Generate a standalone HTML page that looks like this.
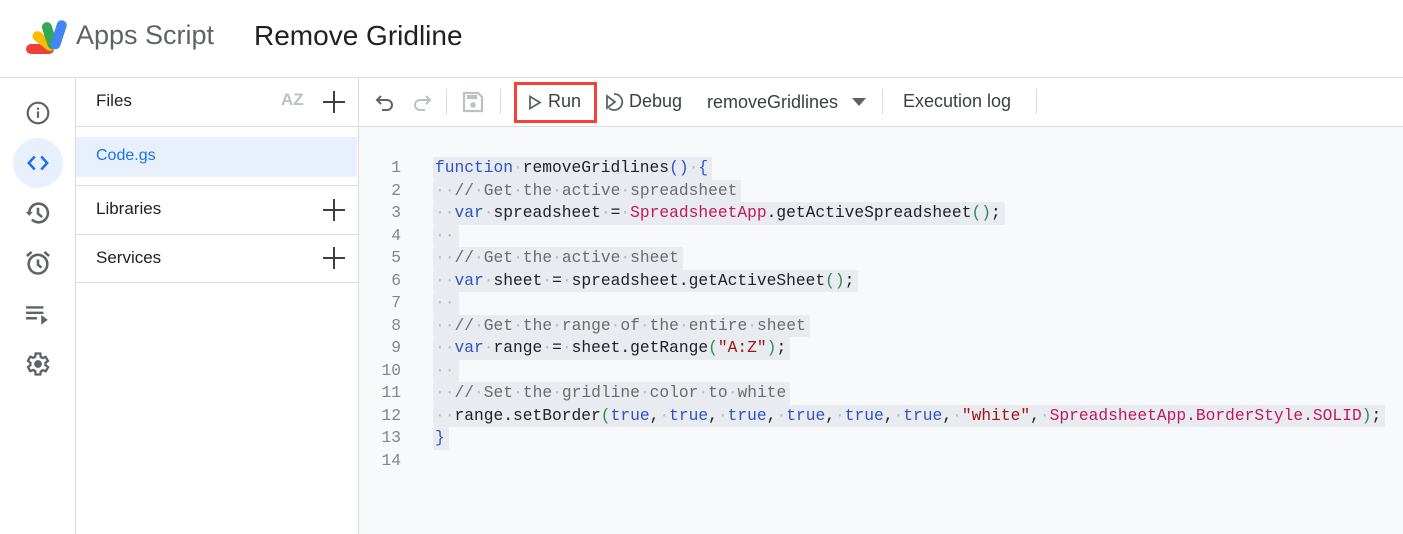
<!DOCTYPE html>
<html><head><meta charset="utf-8"><style>
*{margin:0;padding:0;box-sizing:border-box}
body{width:1403px;height:534px;overflow:hidden;background:#fff;font-family:"Liberation Sans",sans-serif;color:#202124;position:relative}
.a{position:absolute}
.hl{position:absolute;left:0;right:0;top:77px;height:1px;background:#dadce0}
.code{position:absolute;left:359px;top:127px;right:0;bottom:0;background:#f8f9fa}
.ln{position:absolute;left:370px;width:31px;text-align:right;font:16.25px "Liberation Mono",monospace;color:#80868b;line-height:22.5px}
.cl{position:absolute;left:433px;font:16.25px "Liberation Mono",monospace;line-height:22.5px;white-space:pre}
.cl span.b{background:#e8ebf0;padding:0 4px 0 2px;display:inline-block;border-radius:2px}
.d{color:#b8bcc2}.k{color:#2b55c4}.c{color:#6b6b6b}.m{color:#c2185b}.s{color:#a31515}.g{color:#2e8b57}
.side{font-size:17px;color:#202124}
.tb{font-size:18px;color:#3c4043}
</style></head><body>
<svg class="a" style="left:24px;top:18px" width="44" height="36" viewBox="0 0 44 36">
<g transform="translate(30,31)">
<rect x="-28" y="-5" width="28" height="10" rx="5" fill="#ea4335"/>
<rect x="-26" y="-5" width="26" height="10" rx="5" fill="#fbbc04" transform="rotate(38)"/>
<rect x="-28" y="-5" width="28" height="10" rx="5" fill="#34a853" transform="rotate(72)"/>
<rect x="-30" y="-5" width="30" height="10" rx="5" fill="#4285f4" transform="rotate(108)"/>
</g></svg>
<div class="a" style="left:76px;top:20px;font-size:27px;color:#5f6368">Apps Script</div>
<div class="a" style="left:254px;top:20px;font-size:28px;color:#202124">Remove Gridline</div>
<div class="hl"></div>
<div class="a" style="left:75px;top:78px;width:1px;height:456px;background:#dadce0"></div>
<div class="a" style="left:358px;top:78px;width:1px;height:456px;background:#dadce0"></div>
<div class="a" style="left:359px;top:126px;right:0;height:1px;background:#dadce0"></div>
<svg class="a" style="left:25px;top:100px" width="26" height="26" viewBox="0 0 24 24"><circle cx="12" cy="12" r="9.5" fill="none" stroke="#5f6368" stroke-width="2"/><rect x="11" y="10.5" width="2" height="6" fill="#5f6368"/><rect x="11" y="7" width="2" height="2" fill="#5f6368"/></svg>
<div class="a" style="left:13px;top:138px;width:50px;height:50px;border-radius:25px;background:#e8f0fe"></div>
<svg class="a" style="left:25px;top:150px" width="26" height="26" viewBox="0 0 24 24"><path d="M9 6L3.5 12 9 18M15 6l5.5 6L15 18" fill="none" stroke="#1a73e8" stroke-width="2.3"/></svg>
<svg class="a" style="left:24px;top:199px" width="28" height="28" viewBox="0 0 24 24"><path d="M4.5 12a8 8 0 1 1 2.3 5.6" fill="none" stroke="#5f6368" stroke-width="2.2"/><path d="M1.5 11h6l-3 3.5z" fill="#5f6368"/><path d="M12 7.5v5l3.5 3" fill="none" stroke="#5f6368" stroke-width="2.2"/></svg>
<svg class="a" style="left:24px;top:249px" width="28" height="28" viewBox="0 0 24 24"><circle cx="12" cy="13" r="8" fill="none" stroke="#5f6368" stroke-width="2.2"/><path d="M12 9v4.5l3 2.5M2.5 6l4-3.5M21.5 6l-4-3.5" fill="none" stroke="#5f6368" stroke-width="2.2"/></svg>
<svg class="a" style="left:25px;top:303px" width="26" height="24" viewBox="0 0 24 22"><path d="M1 4h16M1 9h16M1 14h10" stroke="#5f6368" stroke-width="2.2"/><path d="M15 11v9l6-4.5z" fill="#5f6368"/></svg>
<svg class="a" style="left:24px;top:350px" width="28" height="28" viewBox="0 0 24 24"><path d="M19.4 13a7.5 7.5 0 0 0 0-2l2.1-1.6-2-3.5-2.5 1a7.4 7.4 0 0 0-1.7-1L15 3h-4l-.4 2.7a7.4 7.4 0 0 0-1.7 1l-2.5-1-2 3.5L6.5 11a7.5 7.5 0 0 0 0 2l-2.1 1.6 2 3.5 2.5-1a7.4 7.4 0 0 0 1.7 1L11 21h4l.4-2.7a7.4 7.4 0 0 0 1.7-1l2.5 1 2-3.5z" fill="none" stroke="#5f6368" stroke-width="2" transform="translate(-1 0)"/><circle cx="12" cy="12" r="3.3" fill="#5f6368"/></svg>
<div class="a side" style="left:96px;top:91px">Files</div>
<div class="a" style="left:281px;top:90px;font-size:17px;font-weight:bold;color:#bdc1c6">AZ</div>
<svg class="a" style="left:323px;top:91px" width="22" height="22"><path d="M11 0v22M0 11h22" stroke="#3c4043" stroke-width="2"/></svg>
<div class="a" style="left:76px;top:126px;width:282px;height:1px;background:#dadce0"></div>
<div class="a" style="left:76px;top:137px;width:281px;height:40px;background:#e8f0fe"></div>
<div class="a" style="left:96px;top:147px;font-size:16px;color:#1a73e8">Code.gs</div>
<div class="a" style="left:76px;top:185px;width:282px;height:1px;background:#dadce0"></div>
<div class="a side" style="left:96px;top:199px">Libraries</div>
<svg class="a" style="left:323px;top:199px" width="22" height="22"><path d="M11 0v22M0 11h22" stroke="#3c4043" stroke-width="2"/></svg>
<div class="a" style="left:76px;top:234px;width:282px;height:1px;background:#dadce0"></div>
<div class="a side" style="left:96px;top:248px">Services</div>
<svg class="a" style="left:323px;top:247px" width="22" height="22"><path d="M11 0v22M0 11h22" stroke="#3c4043" stroke-width="2"/></svg>
<div class="a" style="left:76px;top:282px;width:282px;height:1px;background:#dadce0"></div>
<svg class="a" style="left:375px;top:92px" width="22" height="20" viewBox="0 0 22 20"><path d="M6 4L2 8l4 4" fill="none" stroke="#5f6368" stroke-width="2"/><path d="M2 8h10a5 5 0 0 1 0 10H7" fill="none" stroke="#5f6368" stroke-width="2"/></svg>
<svg class="a" style="left:410px;top:92px" width="22" height="20" viewBox="0 0 22 20"><path d="M16 4l4 4-4 4" fill="none" stroke="#bdc1c6" stroke-width="2"/><path d="M20 8H10a5 5 0 0 0 0 10h5" fill="none" stroke="#bdc1c6" stroke-width="2"/></svg>
<div class="a" style="left:446px;top:89px;width:1px;height:25px;background:#dadce0"></div>
<svg class="a" style="left:462px;top:91px" width="22" height="22" viewBox="0 0 22 22"><path d="M2 2h14l4 4v14H2z" fill="none" stroke="#bdc1c6" stroke-width="2.2"/><rect x="5" y="4" width="10" height="4" fill="#bdc1c6"/><circle cx="11" cy="14" r="2.8" fill="#bdc1c6"/></svg>
<div class="a" style="left:500px;top:89px;width:1px;height:25px;background:#dadce0"></div>
<div class="a" style="left:514px;top:82px;width:83px;height:41px;border:3px solid #f44336"></div>
<svg class="a" style="left:528px;top:95px" width="14" height="15" viewBox="0 0 14 15"><path d="M2 1.5l10 6-10 6z" fill="none" stroke="#5f6368" stroke-width="1.8"/></svg>
<div class="a tb" style="left:548px;top:91px">Run</div>
<svg class="a" style="left:605px;top:92px" width="20" height="20" viewBox="0 0 20 20"><path d="M9 2a8 8 0 1 1-5 14" fill="none" stroke="#5f6368" stroke-width="1.8"/><path d="M2 4l8 6-8 6z" fill="none" stroke="#5f6368" stroke-width="1.8"/></svg>
<div class="a tb" style="left:629px;top:91px">Debug</div>
<div class="a tb" style="left:707px;top:92px">removeGridlines</div>
<svg class="a" style="left:852px;top:98px" width="14" height="8"><path d="M0 0h14L7 8z" fill="#5f6368"/></svg>
<div class="a" style="left:882px;top:89px;width:1px;height:25px;background:#dadce0"></div>
<div class="a tb" style="left:903px;top:91px">Execution log</div>
<div class="a" style="left:1036px;top:89px;width:1px;height:25px;background:#dadce0"></div>
<div class="code"></div>
<div class="ln" style="top:157px">1<br>2<br>3<br>4<br>5<br>6<br>7<br>8<br>9<br>10<br>11<br>12<br>13<br>14</div>
<div class="cl" style="top:157px"><span class="b"><span class="k">function</span><span class="d">·</span>removeGridlines<span class="k">()</span><span class="d">·</span><span class="k">{</span></span>
<span class="b"><span class="d">··</span><span class="c">//<span class="d">·</span>Get<span class="d">·</span>the<span class="d">·</span>active<span class="d">·</span>spreadsheet</span></span>
<span class="b"><span class="d">··</span><span class="k">var</span><span class="d">·</span>spreadsheet<span class="d">·</span>=<span class="d">·</span><span class="m">SpreadsheetApp</span>.getActiveSpreadsheet<span class="g">()</span>;</span>
<span class="b"><span class="d">··</span></span>
<span class="b"><span class="d">··</span><span class="c">//<span class="d">·</span>Get<span class="d">·</span>the<span class="d">·</span>active<span class="d">·</span>sheet</span></span>
<span class="b"><span class="d">··</span><span class="k">var</span><span class="d">·</span>sheet<span class="d">·</span>=<span class="d">·</span>spreadsheet.getActiveSheet<span class="g">()</span>;</span>
<span class="b"><span class="d">··</span></span>
<span class="b"><span class="d">··</span><span class="c">//<span class="d">·</span>Get<span class="d">·</span>the<span class="d">·</span>range<span class="d">·</span>of<span class="d">·</span>the<span class="d">·</span>entire<span class="d">·</span>sheet</span></span>
<span class="b"><span class="d">··</span><span class="k">var</span><span class="d">·</span>range<span class="d">·</span>=<span class="d">·</span>sheet.getRange<span class="g">(</span><span class="s">"A:Z"</span><span class="g">)</span>;</span>
<span class="b"><span class="d">··</span></span>
<span class="b"><span class="d">··</span><span class="c">//<span class="d">·</span>Set<span class="d">·</span>the<span class="d">·</span>gridline<span class="d">·</span>color<span class="d">·</span>to<span class="d">·</span>white</span></span>
<span class="b"><span class="d">··</span>range.setBorder<span class="g">(</span><span class="k">true</span>,<span class="d">·</span><span class="k">true</span>,<span class="d">·</span><span class="k">true</span>,<span class="d">·</span><span class="k">true</span>,<span class="d">·</span><span class="k">true</span>,<span class="d">·</span><span class="k">true</span>,<span class="d">·</span><span class="s">"white"</span>,<span class="d">·</span><span class="m">SpreadsheetApp.BorderStyle.SOLID</span><span class="g">)</span>;</span>
<span class="b"><span class="k">}</span></span>
</div>
</body></html>
